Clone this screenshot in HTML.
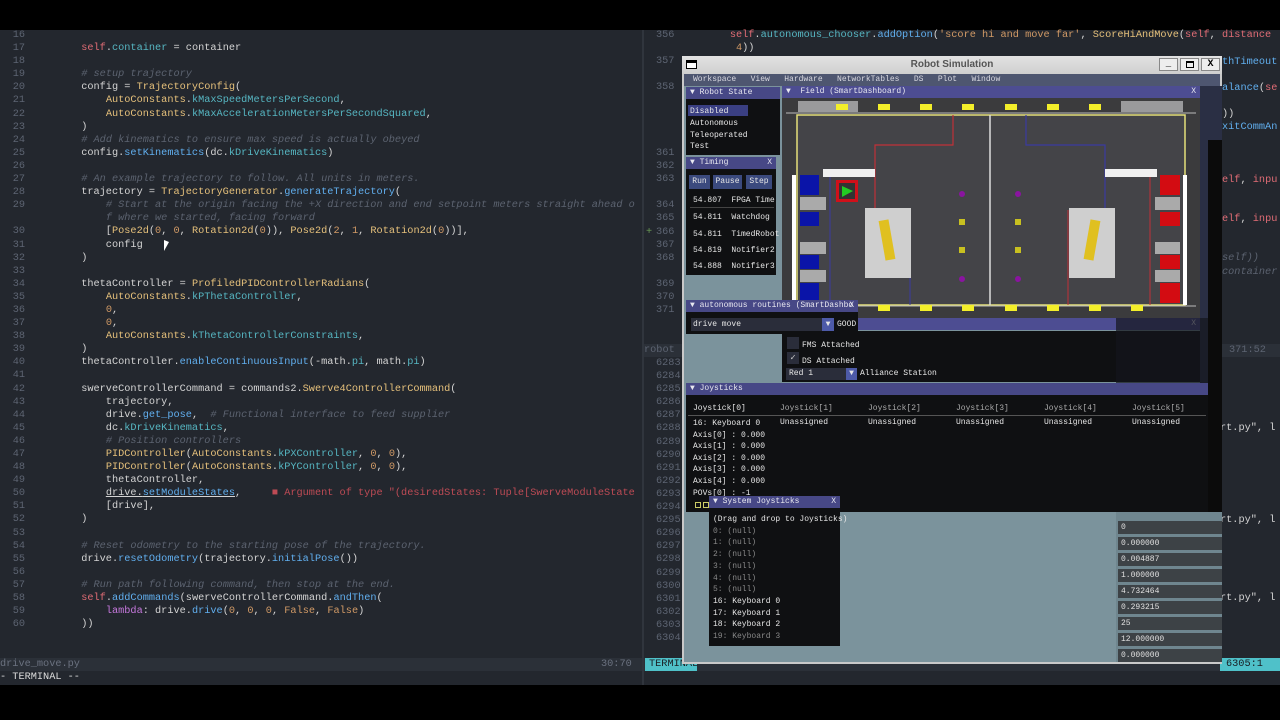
<!DOCTYPE html>
<html><head><meta charset="utf-8"><style>
*{margin:0;padding:0;box-sizing:border-box}
body{width:1280px;height:720px;background:#000;position:relative;overflow:hidden;font-family:"Liberation Mono",monospace}
.a{position:absolute;white-space:pre}
#ed{position:absolute;left:0;top:30px;width:1280px;height:655px;background:#23272e}
.code{font-size:10.25px;line-height:13.1px;color:#d4d4d4}
.ln{color:#5d6472}
.s{color:#e06c75}.c{color:#5c6370;font-style:italic}.y{color:#e5c07b}.t{color:#56b6c2}.b{color:#61afef}.n{color:#d19a66}.p{color:#c678dd}.r{color:#be4b55}
.ig{font-size:8px;color:#e6e6e6;line-height:10px}
.hd{position:absolute;background:#474886;color:#e8e8f0;font-size:8px;line-height:12px;height:12px;padding-left:4px;white-space:pre}
.bk{position:absolute;background:#0f1012}
.x{position:absolute;right:4px;top:0}
.vb{position:absolute;left:1118px;width:104px;height:13px;background:#3d4246;font-size:8px;color:#e0e0e0;line-height:13px;padding-left:3px}
</style></head><body>
<div id="ed"></div>
<!-- left pane -->
<div class="a code ln" style="left:10px;top:29px;text-align:right;width:15px">16
17
18
19
20
21
22
23
24
25
26
27
28
29

30
31
32
33
34
35
36
37
38
39
40
41
42
43
44
45
46
47
48
49
50
51
52
53
54
55
56
57
58
59
60</div>
<pre class="a code" style="left:32px;top:29px;font-family:inherit">

        <span class="s">self</span>.<span class="t">container</span> = container

        <span class="c"># setup trajectory</span>
        config = <span class="y">TrajectoryConfig</span>(
            <span class="y">AutoConstants</span>.<span class="t">kMaxSpeedMetersPerSecond</span>,
            <span class="y">AutoConstants</span>.<span class="t">kMaxAccelerationMetersPerSecondSquared</span>,
        )
        <span class="c"># Add kinematics to ensure max speed is actually obeyed</span>
        config.<span class="b">setKinematics</span>(dc.<span class="t">kDriveKinematics</span>)

        <span class="c"># An example trajectory to follow. All units in meters.</span>
        trajectory = <span class="y">TrajectoryGenerator</span>.<span class="b">generateTrajectory</span>(
            <span class="c"># Start at the origin facing the +X direction and end setpoint meters straight ahead o</span>
            <span class="c">f where we started, facing forward</span>
            [<span class="y">Pose2d</span>(<span class="n">0</span>, <span class="n">0</span>, <span class="y">Rotation2d</span>(<span class="n">0</span>)), <span class="y">Pose2d</span>(<span class="n">2</span>, <span class="n">1</span>, <span class="y">Rotation2d</span>(<span class="n">0</span>))],
            config
        )

        thetaController = <span class="y">ProfiledPIDControllerRadians</span>(
            <span class="y">AutoConstants</span>.<span class="t">kPThetaController</span>,
            <span class="n">0</span>,
            <span class="n">0</span>,
            <span class="y">AutoConstants</span>.<span class="t">kThetaControllerConstraints</span>,
        )
        thetaController.<span class="b">enableContinuousInput</span>(-math.<span class="t">pi</span>, math.<span class="t">pi</span>)

        swerveControllerCommand = commands2.<span class="y">Swerve4ControllerCommand</span>(
            trajectory,
            drive.<span class="b">get_pose</span>,  <span class="c"># Functional interface to feed supplier</span>
            dc.<span class="t">kDriveKinematics</span>,
            <span class="c"># Position controllers</span>
            <span class="y">PIDController</span>(<span class="y">AutoConstants</span>.<span class="t">kPXController</span>, <span class="n">0</span>, <span class="n">0</span>),
            <span class="y">PIDController</span>(<span class="y">AutoConstants</span>.<span class="t">kPYController</span>, <span class="n">0</span>, <span class="n">0</span>),
            thetaController,
            <u>drive.<span class="b">setModuleStates</span></u>,     <span class="r">&#9632; Argument of type "(desiredStates: Tuple[SwerveModuleState</span>
            [drive],
        )

        <span class="c"># Reset odometry to the starting pose of the trajectory.</span>
        drive.<span class="b">resetOdometry</span>(trajectory.<span class="b">initialPose</span>())

        <span class="c"># Run path following command, then stop at the end.</span>
        <span class="s">self</span>.<span class="b">addCommands</span>(swerveControllerCommand.<span class="b">andThen</span>(
            <span class="p">lambda</span>: drive.<span class="b">drive</span>(<span class="n">0</span>, <span class="n">0</span>, <span class="n">0</span>, <span class="n">False</span>, <span class="n">False</span>)
        ))</pre>
<div class="a" style="left:164px;top:240px;width:0;height:0;border-left:5px solid #fff;border-bottom:9px solid transparent;border-top:2px solid transparent"></div>
<div class="a code" style="left:0;top:658px;width:642px;height:13px;background:#2b3038;color:#6b7280">drive_move.py<span style="position:absolute;left:601px">30:70</span></div>
<div class="a code" style="left:0;top:671px;color:#ddd">- TERMINAL --</div>
<div class="a" style="left:642px;top:30px;width:2px;height:655px;background:#30353d"></div>
<div class="a" style="left:0;top:685px;width:1280px;height:35px;background:#000"></div>

<!-- right pane -->
<pre class="a code" style="left:656px;top:29px;font-family:inherit"><span class="ln">356</span>         <span class="s">self</span>.<span class="t">autonomous_chooser</span>.<span class="b">addOption</span>(<span class="n">'score hi and move far'</span>, <span class="y">ScoreHiAndMove</span>(<span class="s">self</span>, <span class="s">distance</span>
             <span class="n">4</span>))
<span class="ln">357</span>
<span class="ln"></span>
<span class="ln">358</span></pre>
<div class="a code ln" style="left:656px;top:147px">361
362
363

364
365
<span style="position:absolute;left:-10px;color:#6a9955">+</span>366
367
368

369
370
371</div>
<div class="a code" style="left:644px;top:344px;width:636px;height:13px;background:#2b3038;color:#5d6472">robot<span style="position:absolute;left:585px">371:52</span></div>
<div class="a code ln" style="left:656px;top:357px">6283
6284
6285
6286
6287
6288
6289
6290
6291
6292
6293
6294
6295
6296
6297
6298
6299
6300
6301
6302
6303
6304</div>
<div class="a code" style="left:644px;top:658px;width:636px;height:13px;background:#2b3038"></div>
<div class="a code" style="left:645px;top:658px;width:52px;height:13px;background:#4fc1c9;color:#1a1d22;padding-left:4px">TERMINAL</div>
<div class="a code" style="left:1220px;top:658px;width:60px;height:13px;background:#4fc1c9;color:#1a1d22;padding-left:6px">6305:1</div>
<pre class="a code" style="left:1222px;top:56px;font-family:inherit"><span class="b">thTimeout</span>

<span class="b">alance</span>(<span class="s">se</span>

))
<span class="b">xitCommAn</span>



<span class="s">elf</span>, <span class="s">inpu</span>


<span class="s">elf</span>, <span class="s">inpu</span>


<span class="c">self))</span>
<span class="c">container</span></pre>
<pre class="a code" style="left:1220px;top:422px;font-family:inherit">rt.py", l






rt.py", l





rt.py", l</pre>

<!-- window -->
<div class="a" style="left:682px;top:56px;width:540px;height:608px;background:#7b939c;border:2px solid #c9c9c9;border-top:none"></div>
<div class="a" style="left:682px;top:56px;width:540px;height:18px;background:linear-gradient(#e2e2e2,#cfcfcf);font-family:'Liberation Sans',sans-serif;font-size:10px;color:#555;text-align:center;line-height:17px;font-weight:bold">Robot Simulation</div>
<div class="a" style="left:686px;top:60px;width:11px;height:9px;border:1px solid #000;border-top:3px solid #000;background:#fff"></div>
<div class="a" style="left:1159px;top:58px;width:19px;height:13px;border:1px solid #888;background:#eee;font-size:9px;text-align:center;line-height:11px">_</div>
<div class="a" style="left:1180px;top:58px;width:19px;height:13px;border:1px solid #888;background:#eee"><div style="position:absolute;left:5px;top:2px;width:8px;height:7px;border:1px solid #000;border-top-width:2px"></div></div>
<div class="a" style="left:1201px;top:58px;width:19px;height:13px;border:1px solid #888;background:#eee;font-size:10px;text-align:center;line-height:12px;font-weight:bold">X</div>
<div class="a ig" style="left:684px;top:74px;width:536px;height:12px;background:#4e5670;line-height:12px;color:#d8d8e0;padding-left:9px">Workspace   View   Hardware   NetworkTables   DS   Plot   Window</div>

<!-- Robot state -->
<div class="bk" style="left:686px;top:99px;width:94px;height:56px"></div>
<div class="hd" style="left:686px;top:87px;width:94px">▼ Robot State</div>
<div class="a" style="left:688px;top:105px;width:60px;height:11px;background:#3a3f82"></div>
<div class="a ig" style="left:690px;top:106px;line-height:11.8px">Disabled
Autonomous
Teleoperated
Test</div>
<!-- Timing -->
<div class="bk" style="left:686px;top:169px;width:90px;height:106px"></div>
<div class="hd" style="left:686px;top:157px;width:90px">▼ Timing<span class="x">X</span></div>
<div class="a ig" style="left:689px;top:175px;width:21px;height:14px;background:#3b4a7e;line-height:14px;text-align:center">Run</div>
<div class="a ig" style="left:713px;top:175px;width:29px;height:14px;background:#3b4a7e;line-height:14px;text-align:center">Pause</div>
<div class="a ig" style="left:746px;top:175px;width:26px;height:14px;background:#3b4a7e;line-height:14px;text-align:center">Step</div>
<div class="a ig" style="left:693px;top:193px;line-height:16px">54.807  FPGA Time
<span style="line-height:18px">54.811  Watchdog</span>
54.811  TimedRobot
54.819  Notifier2
54.888  Notifier3</div>
<div class="a" style="left:690px;top:207px;width:84px;height:1px;background:#444"></div>

<!-- Field -->
<div class="hd" style="left:782px;top:86px;width:418px;background:#4d4d92">▼  Field (SmartDashboard)<span class="x">X</span></div>
<div class="a" style="left:1200px;top:86px;width:22px;height:300px;background:#2a2f44"></div>
<div class="a" style="left:1208px;top:140px;width:14px;height:372px;background:#0b0b0b"></div>
<svg class="a" style="left:782px;top:98px" width="418" height="220" viewBox="782 98 418 220">
<rect x="782" y="98" width="418" height="220" fill="#3b3b3d"/>
<rect x="797" y="115" width="388" height="190" fill="#444448" stroke="#e5e07a" stroke-width="1.5"/>
<rect x="798" y="101" width="60" height="11" fill="#9a9a9c"/><rect x="1121" y="101" width="62" height="11" fill="#9a9a9c"/>
<line x1="786" y1="113" x2="1196" y2="113" stroke="#bbb"/><line x1="786" y1="306" x2="1196" y2="306" stroke="#bbb"/>
<g fill="#f3ee2a">
<rect x="836" y="104" width="12" height="6"/><rect x="878" y="104" width="12" height="6"/><rect x="920" y="104" width="12" height="6"/><rect x="962" y="104" width="12" height="6"/><rect x="1005" y="104" width="12" height="6"/><rect x="1047" y="104" width="12" height="6"/><rect x="1089" y="104" width="12" height="6"/>
<rect x="836" y="305" width="12" height="6"/><rect x="878" y="305" width="12" height="6"/><rect x="920" y="305" width="12" height="6"/><rect x="962" y="305" width="12" height="6"/><rect x="1005" y="305" width="12" height="6"/><rect x="1047" y="305" width="12" height="6"/><rect x="1089" y="305" width="12" height="6"/><rect x="1131" y="305" width="12" height="6"/></g>
<line x1="990" y1="115" x2="990" y2="305" stroke="#ddd" stroke-width="1.5"/>
<polyline points="953,115 953,145 875,145 875,210" fill="none" stroke="#c03038" stroke-width="1.2"/>
<polyline points="1026,115 1026,145 1105,145 1105,210" fill="none" stroke="#3a3aa0" stroke-width="1.2"/>
<line x1="910" y1="210" x2="910" y2="305" stroke="#3a3aa0"/><line x1="1068" y1="210" x2="1068" y2="305" stroke="#c03038"/>
<line x1="830" y1="175" x2="830" y2="305" stroke="#3a3aa0"/><line x1="1150" y1="175" x2="1150" y2="305" stroke="#c03038"/>
<g fill="#0a14a8"><rect x="800" y="175" width="19" height="20"/><rect x="800" y="212" width="19" height="14"/><rect x="800" y="255" width="19" height="14"/><rect x="800" y="283" width="19" height="20"/></g>
<g fill="#aaa"><rect x="800" y="197" width="26" height="13"/><rect x="800" y="242" width="26" height="12"/><rect x="800" y="270" width="26" height="12"/></g>
<g fill="#d30c12"><rect x="1160" y="175" width="20" height="20"/><rect x="1160" y="212" width="20" height="14"/><rect x="1160" y="255" width="20" height="14"/><rect x="1160" y="283" width="20" height="20"/></g>
<g fill="#aaa"><rect x="1155" y="197" width="25" height="13"/><rect x="1155" y="242" width="25" height="12"/><rect x="1155" y="270" width="25" height="12"/></g>
<rect x="823" y="169" width="52" height="8" fill="#f0f0f0"/><rect x="1105" y="169" width="52" height="8" fill="#f0f0f0"/>
<rect x="1183" y="175" width="4" height="130" fill="#fff"/><rect x="792" y="175" width="4" height="130" fill="#fff"/>
<rect x="836" y="180" width="22" height="22" fill="#d0101a"/><rect x="839" y="183" width="16" height="16" fill="#333"/><polygon points="842,186 842,197 853,191" fill="#22cc22"/>
<rect x="865" y="208" width="46" height="70" fill="#cfcfcf"/><rect x="1069" y="208" width="46" height="70" fill="#cfcfcf"/>
<rect x="882" y="220" width="10" height="40" fill="#e0c020" transform="rotate(-10 887 240)"/><rect x="1087" y="220" width="10" height="40" fill="#e0c020" transform="rotate(10 1092 240)"/>
<g fill="#8a14a0"><circle cx="962" cy="194" r="3"/><circle cx="1018" cy="194" r="3"/><circle cx="962" cy="279" r="3"/><circle cx="1018" cy="279" r="3"/></g>
<g fill="#c8c020"><rect x="959" y="219" width="6" height="6"/><rect x="1015" y="219" width="6" height="6"/><rect x="959" y="247" width="6" height="6"/><rect x="1015" y="247" width="6" height="6"/></g>
</svg>

<!-- DS panel -->
<div class="bk" style="left:782px;top:331px;width:418px;height:51px"></div>
<div class="hd" style="left:782px;top:318px;width:418px;background:#4d4d92"><span class="x">X</span></div>
<div class="a" style="left:787px;top:337px;width:12px;height:12px;background:#2a2d3a"></div>
<div class="a" style="left:787px;top:352px;width:12px;height:12px;background:#2a2d3a;color:#ccc;font-size:9px;line-height:12px;text-align:center">✓</div>
<div class="a ig" style="left:802px;top:338px;line-height:15.5px">FMS Attached
DS Attached</div>
<div class="a ig" style="left:786px;top:368px;width:70px;height:12px;background:#2a2d3a;line-height:12px;padding-left:3px">Red 1</div>
<div class="a ig" style="left:846px;top:368px;width:11px;height:12px;background:#4d5aa8;line-height:12px;text-align:center">▼</div>
<div class="a ig" style="left:860px;top:369px">Alliance Station</div>

<!-- autonomous -->
<div class="bk" style="left:686px;top:312px;width:172px;height:22px"></div>
<div class="hd" style="left:686px;top:300px;width:172px">▼ autonomous routines (SmartDashbo<span class="x">X</span></div>
<div class="a ig" style="left:691px;top:318px;width:134px;height:13px;background:#2a2d3a;line-height:13px;padding-left:2px">drive move</div>
<div class="a ig" style="left:822px;top:318px;width:12px;height:13px;background:#4d5aa8;line-height:13px;text-align:center">▼</div>
<div class="a ig" style="left:837px;top:320px">GOOD</div>

<!-- right values column -->
<div class="a" style="left:1116px;top:318px;width:92px;height:194px;background:rgba(20,22,28,.7)"></div>
<div class="a" style="left:1116px;top:512px;width:106px;height:150px;background:#6f868f"></div>
<div class="vb" style="top:521px">0</div><div class="vb" style="top:537px">0.000000</div><div class="vb" style="top:553px">0.004887</div><div class="vb" style="top:569px">1.000000</div><div class="vb" style="top:585px">4.732464</div><div class="vb" style="top:601px">0.293215</div><div class="vb" style="top:617px">25</div><div class="vb" style="top:633px">12.000000</div><div class="vb" style="top:649px">0.000000</div>

<!-- Joysticks -->
<div class="bk" style="left:686px;top:395px;width:522px;height:117px"></div>
<div class="hd" style="left:686px;top:383px;width:522px">▼ Joysticks</div>
<div class="a ig" style="left:693px;top:404px">Joystick[0]</div><div class="a ig" style="left:780px;top:404px;color:#aaa">Joystick[1]</div><div class="a ig" style="left:868px;top:404px;color:#aaa">Joystick[2]</div><div class="a ig" style="left:956px;top:404px;color:#aaa">Joystick[3]</div><div class="a ig" style="left:1044px;top:404px;color:#aaa">Joystick[4]</div><div class="a ig" style="left:1132px;top:404px;color:#aaa">Joystick[5]</div>
<div class="a" style="left:688px;top:415px;width:518px;height:1px;background:#555"></div>
<div class="a ig" style="left:693px;top:418px;line-height:11.6px">16: Keyboard 0
Axis[0] : 0.000
Axis[1] : 0.000
Axis[2] : 0.000
Axis[3] : 0.000
Axis[4] : 0.000
POVs[0] : -1</div>
<div class="a ig" style="left:780px;top:418px">Unassigned</div><div class="a ig" style="left:868px;top:418px">Unassigned</div><div class="a ig" style="left:956px;top:418px">Unassigned</div><div class="a ig" style="left:1044px;top:418px">Unassigned</div><div class="a ig" style="left:1132px;top:418px">Unassigned</div>
<div class="a" style="left:695px;top:502px;width:6px;height:6px;border:1px solid #cc6"></div><div class="a" style="left:703px;top:502px;width:6px;height:6px;border:1px solid #cc6"></div>

<!-- System Joysticks -->
<div class="bk" style="left:709px;top:508px;width:131px;height:138px"></div>
<div class="hd" style="left:709px;top:496px;width:131px">▼ System Joysticks<span class="x">X</span></div>
<div class="a ig" style="left:713px;top:514px;line-height:11.7px">(Drag and drop to Joysticks)
<span style="color:#888">0: (null)
1: (null)
2: (null)
3: (null)
4: (null)
5: (null)</span>
16: Keyboard 0
17: Keyboard 1
18: Keyboard 2
<span style="color:#888">19: Keyboard 3</span></div>
</body></html>
